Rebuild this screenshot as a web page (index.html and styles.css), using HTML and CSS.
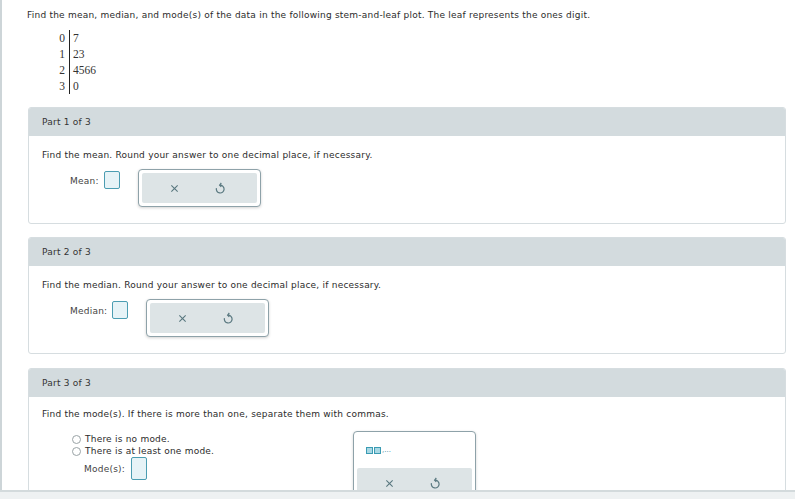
FILE: index.html
```html
<!DOCTYPE html>
<html>
<head>
<meta charset="utf-8">
<link rel="stylesheet" href="styles.css">
</head>
<body>
<div class="page">
  <p class="intro">Find the mean, median, and mode(s) of the data in the following stem-and-leaf plot. The leaf represents the ones digit.</p>
  <table class="stem">
    <tr><td class="s">0</td><td class="l">7</td></tr>
    <tr><td class="s">1</td><td class="l">23</td></tr>
    <tr><td class="s">2</td><td class="l">4566</td></tr>
    <tr><td class="s">3</td><td class="l">0</td></tr>
  </table>

  <section class="part part1">
    <div class="part-head">Part 1 of 3</div>
    <div class="part-body">
      <p class="q">Find the mean. Round your answer to one decimal place, if necessary.</p>
      <div class="answer-row">
        <span class="lbl">Mean:</span>
        <span class="inbox"></span>
        <div class="toolbar">
          <div class="tools">
            <svg class="ic" viewBox="0 0 10 10"><path d="M1.5 1.5 L8.5 8.5 M8.5 1.5 L1.5 8.5"/></svg>
            <svg class="ic undo" viewBox="0 0 10 12"><path d="M5 3.2 A3.9 3.9 0 1 1 1.4 6.2"/><path d="M6.3 1 L4.6 3.1 L6.3 4.9"/></svg>
          </div>
        </div>
      </div>
    </div>
  </section>

  <section class="part part2">
    <div class="part-head">Part 2 of 3</div>
    <div class="part-body">
      <p class="q">Find the median. Round your answer to one decimal place, if necessary.</p>
      <div class="answer-row">
        <span class="lbl">Median:</span>
        <span class="inbox"></span>
        <div class="toolbar">
          <div class="tools">
            <svg class="ic" viewBox="0 0 10 10"><path d="M1.5 1.5 L8.5 8.5 M8.5 1.5 L1.5 8.5"/></svg>
            <svg class="ic undo" viewBox="0 0 10 12"><path d="M5 3.2 A3.9 3.9 0 1 1 1.4 6.2"/><path d="M6.3 1 L4.6 3.1 L6.3 4.9"/></svg>
          </div>
        </div>
      </div>
    </div>
  </section>

  <section class="part part3">
    <div class="part-head">Part 3 of 3</div>
    <div class="part-body">
      <p class="q">Find the mode(s). If there is more than one, separate them with commas.</p>
      <div class="mode-row">
        <div class="choices">
          <label class="opt"><span class="radio"></span>There is no mode.</label>
          <label class="opt"><span class="radio"></span>There is at least one mode.</label>
          <div class="mode-ans"><span class="lbl">Mode(s):</span><span class="inbox tall"></span></div>
        </div>
        <div class="toolbar big">
          <div class="listicon"><span class="sq"></span><span class="sq"></span><span class="dots">,...</span></div>
          <div class="tools">
            <svg class="ic" viewBox="0 0 10 10"><path d="M1.5 1.5 L8.5 8.5 M8.5 1.5 L1.5 8.5"/></svg>
            <svg class="ic undo" viewBox="0 0 10 12"><path d="M5 3.2 A3.9 3.9 0 1 1 1.4 6.2"/><path d="M6.3 1 L4.6 3.1 L6.3 4.9"/></svg>
          </div>
        </div>
      </div>
    </div>
  </section>
</div>
<div class="bottombar"></div>
</body>
</html>
```

FILE: styles.css
```css
html, body {
  margin: 0;
  padding: 0;
  background: #ffffff;
}
body {
  font-family: "DejaVu Sans", Verdana, sans-serif;
  font-size: 9px;
  letter-spacing: 0.22px;
  color: #2b2b2b;
  overflow: hidden;
  height: 499px;
}
.page {
  border-left: 2px solid #cdd5d8;
  min-height: 499px;
  padding: 0 9px 0 25px;
}
.intro {
  margin: 0;
  padding-top: 9px;
  line-height: 12px;
}
.stem {
  border-collapse: collapse;
  margin: 9px 0 0 29px;
  font-family: "Liberation Serif", "Times New Roman", serif;
  font-size: 11.5px;
  letter-spacing: 0;
  color: #333;
}
.stem td {
  padding: 0;
  height: 16px;
  line-height: 16px;
}
.stem .s {
  text-align: right;
  width: 9px;
  padding-right: 4px;
  border-right: 1px solid #222;
}
.stem .l {
  padding-left: 3px;
}
.part {
  border: 1px solid #d6dde0;
  border-radius: 3px;
  margin-left: 1px;
  width: 756px;
}
.part1 { margin-top: 13px; }
.part2 { margin-top: 13px; }
.part3 { margin-top: 14px; }
.part-head {
  background: #d3dbde;
  height: 28px;
  line-height: 28px;
  padding-left: 13px;
  color: #333;
  border-radius: 2px 2px 0 0;
}
.part-body {
  padding: 13px 13px 16px 13px;
}
.part3 .part-body {
  padding-top: 11px;
}
.q {
  margin: 0;
  line-height: 12px;
}
.answer-row {
  display: flex;
  align-items: flex-start;
  margin-top: 8px;
  padding-left: 28px;
}
.lbl {
  margin-top: 6px;
  line-height: 12px;
  color: #444;
}
.inbox {
  display: block;
  width: 14px;
  height: 16px;
  margin: 2px 0 0 5px;
  background: #e6f3f7;
  border: 1px solid #4b9db2;
  border-radius: 2px;
}
.inbox.tall {
  height: 21px;
  margin-top: 0;
  margin-left: 6px;
}
.toolbar {
  margin-left: 18px;
  width: 115px;
  padding: 3px;
  background: #fff;
  border: 1px solid #8ea2a9;
  border-radius: 4px;
  box-shadow: 0 1px 3px rgba(0, 0, 0, 0.18);
}
.tools {
  display: flex;
  align-items: center;
  justify-content: space-around;
  height: 30px;
  background: #dde4e6;
  border-radius: 2px;
  padding: 0 14px 0 10px;
}
.ic {
  width: 9px;
  height: 9px;
  fill: none;
  stroke: #58777f;
  stroke-width: 1.2;
}
.ic.undo {
  width: 10px;
  height: 12px;
}
.mode-row {
  display: flex;
  align-items: flex-start;
  margin-top: 11px;
}
.choices {
  width: 281px;
  padding-left: 30px;
  padding-top: 2px;
}
.opt {
  display: flex;
  align-items: center;
  height: 12px;
  line-height: 12px;
}
.radio {
  display: inline-block;
  width: 7px;
  height: 7px;
  border: 1px solid #9aa3a6;
  border-radius: 50%;
  margin-right: 4px;
  background: #fff;
}
.mode-ans {
  display: flex;
  align-items: center;
  padding-left: 12px;
  margin-top: 0;
}
.mode-ans .lbl {
  margin-top: 0;
}
.toolbar.big {
  margin-left: 0;
  height: 80px;
  padding-top: 0;
}
.listicon {
  display: flex;
  align-items: flex-end;
  height: 26px;
  padding-left: 9px;
  padding-bottom: 4px;
  box-sizing: border-box;
}
.sq {
  display: inline-block;
  width: 5px;
  height: 5px;
  background: #a9d8e4;
  border: 1px solid #3a9bb3;
  margin-right: 1px;
}
.dots {
  font-size: 7px;
  line-height: 8px;
  letter-spacing: 0;
  color: #3a8ea5;
}
.toolbar.big .tools {
  margin-top: 10px;
}
.bottombar {
  position: fixed;
  left: 0;
  right: 0;
  bottom: 0;
  height: 7px;
  background: #eef1f2;
  border-top: 2px solid #d3dadc;
}
```
